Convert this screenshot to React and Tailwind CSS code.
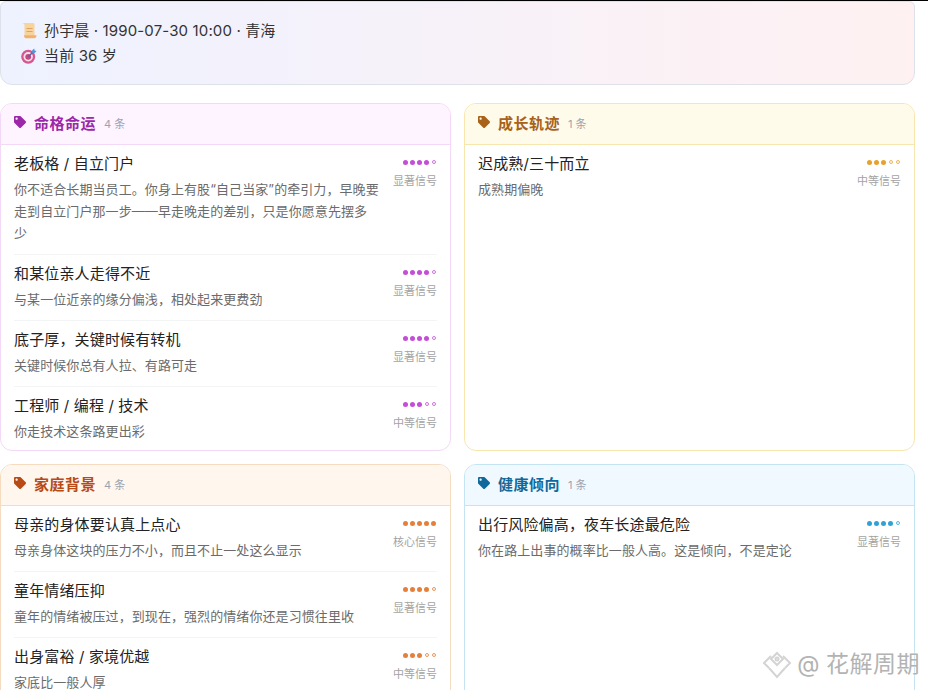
import { FaTag } from "react-icons/fa";

const sections = [
  {
    title: "命格命运",
    count: "4 条",
    box: "border-[#f3d9f7]",
    head: "bg-[#fdf4ff] border-[#f3d9f7]",
    color: "text-[#9c27a8]",
    dot: "bg-[#c24fd6]",
    ring: "border-[#c24fd6]",
    items: [
      { name: "老板格 / 自立门户", desc: "你不适合长期当员工。你身上有股“自己当家”的牵引力，早晚要走到自立门户那一步——早走晚走的差别，只是你愿意先摆多少", level: 4, label: "显著信号" },
      { name: "和某位亲人走得不近", desc: "与某一位近亲的缘分偏浅，相处起来更费劲", level: 4, label: "显著信号" },
      { name: "底子厚，关键时候有转机", desc: "关键时候你总有人拉、有路可走", level: 4, label: "显著信号" },
      { name: "工程师 / 编程 / 技术", desc: "你走技术这条路更出彩", level: 3, label: "中等信号" },
    ],
  },
  {
    title: "成长轨迹",
    count: "1 条",
    box: "border-[#f7e6ae]",
    head: "bg-[#fffbeb] border-[#f7e6ae]",
    color: "text-[#a8621a]",
    dot: "bg-[#e5a32e]",
    ring: "border-[#e5a32e]",
    items: [{ name: "迟成熟/三十而立", desc: "成熟期偏晚", level: 3, label: "中等信号" }],
  },
  {
    title: "家庭背景",
    count: "4 条",
    box: "border-[#f5dcc0]",
    head: "bg-[#fff7ed] border-[#f5dcc0]",
    color: "text-[#b84a15]",
    dot: "bg-[#e5803a]",
    ring: "border-[#e5803a]",
    items: [
      { name: "母亲的身体要认真上点心", desc: "母亲身体这块的压力不小，而且不止一处这么显示", level: 5, label: "核心信号" },
      { name: "童年情绪压抑", desc: "童年的情绪被压过，到现在，强烈的情绪你还是习惯往里收", level: 4, label: "显著信号" },
      { name: "出身富裕 / 家境优越", desc: "家底比一般人厚", level: 3, label: "中等信号" },
    ],
  },
  {
    title: "健康倾向",
    count: "1 条",
    box: "border-[#c5e4f2]",
    head: "bg-[#f0f9ff] border-[#c5e4f2]",
    color: "text-[#11699b]",
    dot: "bg-[#2fa3d3]",
    ring: "border-[#2fa3d3]",
    items: [{ name: "出行风险偏高，夜车长途最危险", desc: "你在路上出事的概率比一般人高。这是倾向，不是定论", level: 4, label: "显著信号" }],
  },
];

function ScrollIcon() {
  return (
    <svg width="16" height="17" viewBox="0 0 16 17" className="shrink-0">
      <path d="M.5 1h11.5c1 0 1.5.8 1.5 1.8V14H3.5V3C3.5 1.8 2.4 1 .5 1z" fill="#f8d39b" />
      <path d="M3 13.2h12.5c0 1.8-.9 3-2.2 3H5c-1.2 0-2-1.2-2-3z" fill="#f3b26a" />
      <path d="M5.5 6.5h6M5.5 9.5h6" stroke="#dfa25f" strokeWidth="1" />
    </svg>
  );
}

function TargetIcon() {
  return (
    <svg width="16" height="16" viewBox="0 0 16 16" className="shrink-0">
      <circle cx="7.2" cy="8.8" r="7" fill="#d9558f" />
      <circle cx="7.2" cy="8.8" r="4.7" fill="#f3e3ea" />
      <circle cx="7.2" cy="8.8" r="2.9" fill="#c9457f" />
      <path d="M7.5 8.5L13 3" stroke="#3f6fa8" strokeWidth="1.4" />
      <path d="M11 2.6L13.2.6l.4 2 2 .4-2.2 2.2-2.2-.4z" fill="#5b95d6" />
    </svg>
  );
}

function Dots({ level, dot, ring }) {
  return (
    <div className="flex items-center justify-end h-[12px] mt-[2px]">
      {[1, 2, 3, 4, 5].map((n) => (
        <span key={n} className="w-[7px] flex items-center justify-center">
          {n <= level ? (
            <span className={`w-[5px] h-[5px] rounded-full ${dot}`}></span>
          ) : (
            <span className={`w-[4px] h-[4px] rounded-full border opacity-80 ${ring}`}></span>
          )}
        </span>
      ))}
    </div>
  );
}

function SectionCard({ section }) {
  return (
    <div className={`bg-white border rounded-xl overflow-hidden ${section.box}`}>
      <div className={`flex items-center h-[40.5px] px-[13px] border-b ${section.head}`}>
        <FaTag className={`text-[12px] mr-2 -mt-[3px] ${section.color}`} />
        <span className={`text-[15px] font-bold tracking-[0.5px] ${section.color}`}>{section.title}</span>
        <span className="text-[11px] text-[#9ca3af] ml-[8px]">{section.count}</span>
      </div>
      <div className="px-[13px]">
        {section.items.map((item, i) => (
          <div
            key={item.name}
            className={`flex gap-[13px] pt-[9.5px] pb-[9.5px] last:pb-[8px] ${i < section.items.length - 1 ? "border-b border-[#f3f4f6]" : ""}`}
          >
            <div className="flex-1 min-w-0">
              <div className="text-[15px] leading-[20px] tracking-[0.15px] text-[#222222] mb-1">{item.name}</div>
              <div className="text-[13px] leading-[22px] tracking-[0.08px] text-[#6b6b6b]">{item.desc}</div>
            </div>
            <div className="w-[44px] shrink-0">
              <Dots level={item.level} dot={section.dot} ring={section.ring} />
              <div className="text-[11px] leading-[16px] text-[#a3a3a3] mt-[4.5px] whitespace-nowrap">{item.label}</div>
            </div>
          </div>
        ))}
      </div>
    </div>
  );
}

export default function App() {
  return (
    <div
      className="relative h-screen overflow-hidden bg-white"
      style={{ fontFamily: 'Inter, "Noto Sans CJK SC", sans-serif' }}
    >
      <div className="h-px bg-black"></div>
      <div className="pr-[13px]">
        <div className="rounded-b-xl rounded-t-md border border-[#dde1ea] bg-gradient-to-r from-[#eef2ff] to-[#fff1f2] py-4 px-[20px] text-[15px] leading-[25px] tracking-[0.14px] text-[#333333] mb-[18px]">
          <div className="flex items-center gap-[7px]">
            <ScrollIcon />
            <span>孙宇晨 · 1990-07-30 10:00 · 青海</span>
          </div>
          <div className="flex items-center gap-[7px]">
            <TargetIcon />
            <span>当前 36 岁</span>
          </div>
        </div>
        <div className="grid grid-cols-2 gap-[13px]">
          {sections.map((s) => (
            <SectionCard key={s.title} section={s} />
          ))}
        </div>
      </div>

      {/* watermark */}
      <div className="absolute right-[8px] bottom-[11px] flex items-center gap-[5px] text-[#b3b3b3]">
        <svg width="30" height="30" viewBox="0 0 30 30" fill="none" stroke="#d4d4d4" strokeWidth="2">
          <path d="M15 4l6 6-6 6-6-6z" />
          <path d="M9 7l-7 7 5 5" />
          <path d="M21 7l7 7-5 5" />
          <path d="M7 19l8 9 8-9" />
          <circle cx="15" cy="10" r="1.5" />
        </svg>
        <div className="flex items-center gap-[6px] text-[23px] leading-[28px] [text-shadow:0_0_2px_#ffffff] tracking-[0.5px]">
          <span>@</span>
          <span>花解周期</span>
        </div>
      </div>
    </div>
  );
}
